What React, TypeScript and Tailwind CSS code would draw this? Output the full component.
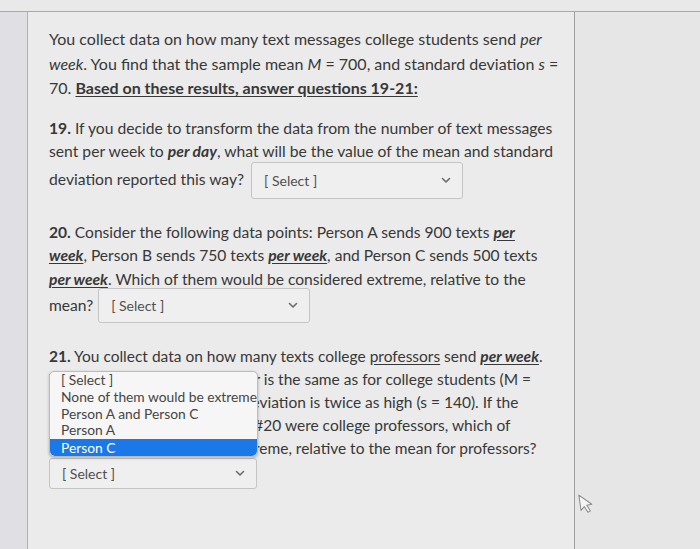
import React from "react";

const font = { fontFamily: "Lato, 'Open Sans', sans-serif" };

function Chevron() {
  return (
    <svg width="10" height="7" viewBox="0 0 10 7" className="shrink-0">
      <path d="M1.5 1.5 L5 5 L8.5 1.5" fill="none" stroke="#6b6b6b" strokeWidth="1.6" strokeLinecap="round" strokeLinejoin="round" />
    </svg>
  );
}

function SelectBox({ w, h }: { w: string; h: string }) {
  return (
    <div className={`${w} ${h} flex items-center justify-between pl-[12px] pr-[11px] bg-[#efefef] border border-[#c4c4c4] rounded-[3px] shrink-0`}>
      <span className="text-[14px] text-[#505050]">[ Select ]</span>
      <Chevron />
    </div>
  );
}

export default function App() {
  return (
    <div className="w-[700px] h-[549px] overflow-hidden bg-[#e3e3e3] flex flex-col relative text-[#383838]" style={font}>
      <div className="h-[12px] bg-[#e9e9e9] border-b border-[#a9a9a9] shrink-0" />
      <div className="flex flex-1">
        <div className="w-[28px] border-r border-[#b0b0b0] bg-[#e0dfe3] shrink-0" />
        <div className="w-[547px] border-r border-[#9e9e9e] bg-[#ebebeb] shrink-0 pl-[21px] pt-[15px]">
          <div className="leading-[24.5px] whitespace-nowrap text-[16px]">
            You collect data on how many text messages college students send <i>per</i>
            <br />
            <i>week</i>. You find that the sample mean <i>M</i> = 700, and standard deviation <i>s</i> =
            <br />
            70. <u className="font-bold underline-offset-2">Based on these results, answer questions 19-21:</u>
          </div>

          <div className="text-[15.7px]">
            <div className="mt-[16px] leading-[23.5px] whitespace-nowrap">
              <b>19.</b> If you decide to transform the data from the number of text messages
              <br />
              sent per week to <b><i>per day</i></b>, what will be the value of the mean and standard
            </div>
            <div className="flex items-center h-[37px] -mt-[2px] whitespace-nowrap">
              <span>deviation reported this way?</span>
              <div className="ml-[7px]">
                <SelectBox w="w-[212px]" h="h-[37px]" />
              </div>
            </div>
          </div>

          <div className="text-[15.6px]">
            <div className="mt-[22px] leading-[23.5px] whitespace-nowrap">
              <b>20.</b> Consider the following data points: Person A sends 900 texts <u className="font-bold italic underline-offset-2">per</u>
              <br />
              <u className="font-bold italic underline-offset-2">week</u>, Person B sends 750 texts <u className="font-bold italic underline-offset-2">per week</u>, and Person C sends 500 texts
              <br />
              <u className="font-bold italic underline-offset-2">per week</u>. Which of them would be considered extreme, relative to the
            </div>
            <div className="flex items-center h-[35px] -mt-[3px] whitespace-nowrap">
              <span>mean?</span>
              <div className="ml-[5px]">
                <SelectBox w="w-[212px]" h="h-[35px]" />
              </div>
            </div>
          </div>

          <div className="mt-[22px] relative text-[15.5px]">
            <div className="leading-[23px] whitespace-nowrap">
              <b>21.</b> You collect data on how many texts college <u className="underline-offset-2">professors</u> send <u className="font-bold italic underline-offset-2">per week</u>.
              <br />
              You find that the mean number is the same as for college students (M =
              <br />
              700), however, the standard deviation is twice as high (s = 140). If the
              <br />
              data points from the question #20 were college professors, which of
              <br />
              them would be considered extreme, relative to the mean for professors?
            </div>
            <div className="-mt-[2px]">
              <SelectBox w="w-[208px]" h="h-[31px]" />
            </div>

            <div className="absolute left-[0px] top-[26px] w-[209px] bg-[#f6f6f6] border border-[#bcbcbc] rounded-[5px] shadow-[0_1px_3px_rgba(0,0,0,0.25)] text-[13.8px] text-[#454545] overflow-hidden">
              <div className="h-[16.8px] leading-[16.8px] pl-[11px] whitespace-nowrap">[ Select ]</div>
              <div className="h-[16.8px] leading-[16.8px] pl-[11px] whitespace-nowrap">None of them would be extreme</div>
              <div className="h-[16.8px] leading-[16.8px] pl-[11px] whitespace-nowrap">Person A and Person C</div>
              <div className="h-[16.8px] leading-[16.8px] pl-[11px] whitespace-nowrap">Person A</div>
              <div className="h-[17px] leading-[17px] pl-[11px] whitespace-nowrap bg-[#1a78e8] text-white rounded-b-[5px]">Person C</div>
            </div>
          </div>
        </div>
        <div className="flex-1 bg-[#e6e6e6]" />
      </div>

      <svg className="absolute left-[578px] top-[493px]" width="18" height="22" viewBox="0 0 18 22">
        <path d="M2 1.5 L2 17 L5.8 13.6 L8.6 19.8 L11.2 18.7 L8.4 12.6 L13.6 12.3 Z" fill="#f4f4f4" stroke="#8a8a8a" strokeWidth="1" strokeLinejoin="round" transform="rotate(-8 6 10)" />
      </svg>
    </div>
  );
}
